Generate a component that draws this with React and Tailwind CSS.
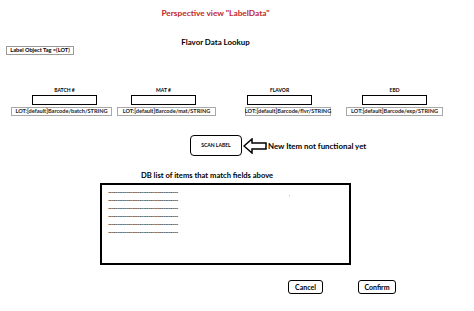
import React from 'react';

const fields = [
  { label: 'BATCH #', tag: 'LOT:[default]Barcode/batch/STRING', inputMl: 'ml-[21px]', tagW: 'w-[101px]', colMl: 'ml-[11px]' },
  { label: 'MAT #', tag: 'LOT:[default]Barcode/mat/STRING', inputMl: 'ml-[14px]', tagW: 'w-[99px]', colMl: 'ml-[5px]' },
  { label: 'FLAVOR', tag: 'LOT:[default]Barcode/flvr/STRING', inputMl: 'ml-[2px]', tagW: 'w-[86px]', colMl: 'ml-[29px]' },
  { label: 'EBD', tag: 'LOT:[default]Barcode/exp/STRING', inputMl: 'ml-[16px]', tagW: 'w-[97px]', colMl: 'ml-[15px]' },
];

const App = () => {
  return (
    <div className="w-[474px] h-[311px] bg-white overflow-hidden font-['Lato',_'Liberation_Sans',_sans-serif] font-bold text-black">
      <div className="pt-[8px] w-[431px] text-center text-[8.3px] leading-[10px] h-[18px] text-[#c0272d]">
        Perspective view "LabelData"
      </div>
      <div className="mt-[19px] w-[431px] text-center text-[7.9px] leading-[10px] h-[10px]">
        Flavor Data Lookup
      </div>
      <div className="mt-[-1px] ml-[6px] w-[68px] h-[9px] border border-[#9a9a9a] flex items-center justify-center text-[5.6px] whitespace-nowrap">
        Label Object Tag =(LOT)
      </div>

      <div className="mt-[32px] flex">
        {fields.map((f) => (
          <div key={f.label} className={`${f.colMl} flex flex-col items-start`}>
            <div className={`${f.inputMl} w-[65px] flex flex-col`}>
              <div className="h-[6px] leading-[6px] text-[5px] text-center">{f.label}</div>
              <div className="mt-[2px] h-[10px] border-[1.5px] border-black bg-white"></div>
            </div>
            <div className={`${f.tagW} mt-[2px] h-[9px] border border-[#a8a8a8] flex items-center justify-center text-[5.6px] whitespace-nowrap text-[#222]`}>
              {f.tag}
            </div>
          </div>
        ))}
      </div>

      <div className="mt-[19px] flex items-center">
        <div className="ml-[190px] w-[52px] h-[21px] border-[1.5px] border-black rounded-[4px] flex items-center justify-center text-[5px]">
          SCAN LABEL
        </div>
        <svg width="24" height="16" viewBox="0 0 24 16" className="ml-[1px]">
          <polygon points="1,8 9,1 9,5 23,5 23,11 9,11 9,15" fill="white" stroke="black" strokeWidth="1.5" strokeLinejoin="miter" />
        </svg>
        <div className="ml-[1px] text-[7.9px] leading-[10px] whitespace-nowrap">New Item not functional yet</div>
      </div>

      <div className="mt-[15px] ml-[141px] h-[8px] leading-[8px] text-[7.6px] whitespace-nowrap">
        DB list of items that match fields above
      </div>
      <div className="mt-[4px] ml-[100px] w-[251px] h-[82px] border-2 border-black relative">
        <div className="pt-[3px] pl-[6px] flex flex-col">
          {[0, 1, 2, 3, 4, 5].map((i) => (
            <div key={i} className="h-[8px] leading-[8px] text-[6px] tracking-[-0.4px] whitespace-nowrap">
              --------------------------------------
            </div>
          ))}
        </div>
        <div className="absolute left-[187px] top-[10px] w-[1px] h-[1px] bg-[#bbb]"></div>
      </div>

      <div className="mt-[15px] flex">
        <div className="ml-[288px] w-[35px] h-[14px] border-[1.5px] border-black rounded-[3px] flex items-center justify-center text-[7px]">
          Cancel
        </div>
        <div className="ml-[35px] w-[38px] h-[14px] border-[1.5px] border-black rounded-[3px] flex items-center justify-center text-[7px]">
          Confirm
        </div>
      </div>
    </div>
  );
};

export default App;
